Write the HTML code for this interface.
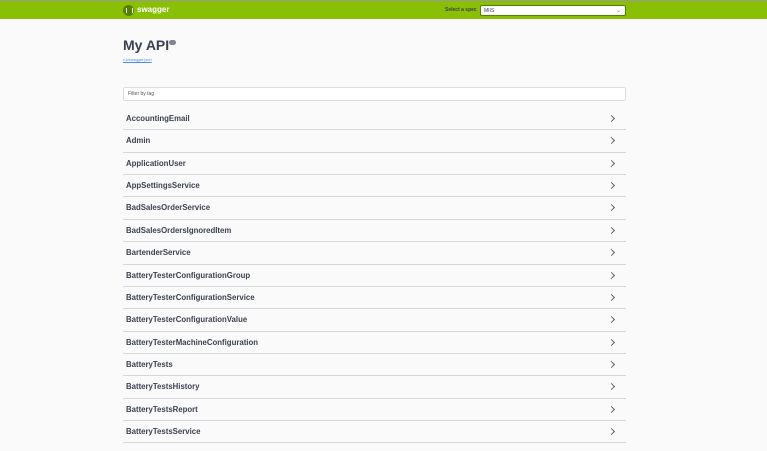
<!DOCTYPE html>
<html><head><style>
*{margin:0;padding:0;box-sizing:border-box}
body{width:767px;height:451px;overflow:hidden;background:#fafafa;font-family:"Liberation Sans",sans-serif;color:#3b4151;position:relative}
.top{position:absolute;left:0;top:0;width:767px;height:19px;background:#89bf04;border-top:1px solid #9a9a9a}
.logo{position:absolute;left:123px;top:4px;width:11px;height:11px;border-radius:50%;background:#547f00;}
.logo:after{content:"";position:absolute;left:3px;top:3px;width:5px;height:5px;border-left:1px solid #fff;border-right:1px solid #fff}
.brand{position:absolute;left:137px;top:4px;color:#fff;font-weight:bold;font-size:8px}
.sl{position:absolute;left:445px;top:6px;font-size:5px;font-weight:bold;color:#3b4151}
.sel{position:absolute;left:480px;top:4px;width:146px;height:11px;background:#fff;border:1px solid #547f00;border-radius:2px;font-size:5px;padding:2px 3px}
.sel span{position:absolute;right:4px;top:1px;font-size:6px;color:#777}
h1{position:absolute;left:123px;top:37px;font-size:14px;font-weight:bold}
.ver{position:absolute;left:169px;top:40px;width:7px;height:5px;border-radius:3px;background:#7d8492}
.url{position:absolute;left:123px;top:57px;font-size:4px;color:#4990e2;text-decoration:underline}
.filter{position:absolute;left:123px;top:87px;width:503px;height:14px;background:#fff;border:1px solid #d8dde7;border-radius:2px;font-size:5px;padding:3px 4px;color:#555}
.row{position:absolute;left:123px;width:503px;height:22.36px;border-bottom:1px solid #d4d6da;font-size:7.8px;font-weight:bold;padding-left:3px;line-height:22px}
.row i{position:absolute;right:12px;top:8px;width:5px;height:5px;border-right:1px solid #666;border-top:1px solid #666;transform:rotate(45deg)}
</style></head><body>
<div class="top"><div class="logo"></div><div class="brand">swagger</div><div class="sl">Select a spec</div><div class="sel">MIIS<span>⌄</span></div></div>
<h1>My API</h1><div class="ver"></div>
<div class="url">v1/swagger.json</div>
<div class="filter">Filter by tag</div>
<div class="row" style="top:108px">AccountingEmail<i></i></div>
<div class="row" style="top:130.4px">Admin<i></i></div>
<div class="row" style="top:152.7px">ApplicationUser<i></i></div>
<div class="row" style="top:175.1px">AppSettingsService<i></i></div>
<div class="row" style="top:197.4px">BadSalesOrderService<i></i></div>
<div class="row" style="top:219.8px">BadSalesOrdersIgnoredItem<i></i></div>
<div class="row" style="top:242.2px">BartenderService<i></i></div>
<div class="row" style="top:264.5px">BatteryTesterConfigurationGroup<i></i></div>
<div class="row" style="top:286.9px">BatteryTesterConfigurationService<i></i></div>
<div class="row" style="top:309.2px">BatteryTesterConfigurationValue<i></i></div>
<div class="row" style="top:331.6px">BatteryTesterMachineConfiguration<i></i></div>
<div class="row" style="top:354px">BatteryTests<i></i></div>
<div class="row" style="top:376.3px">BatteryTestsHistory<i></i></div>
<div class="row" style="top:398.7px">BatteryTestsReport<i></i></div>
<div class="row" style="top:421px">BatteryTestsService<i></i></div>
</body></html>
